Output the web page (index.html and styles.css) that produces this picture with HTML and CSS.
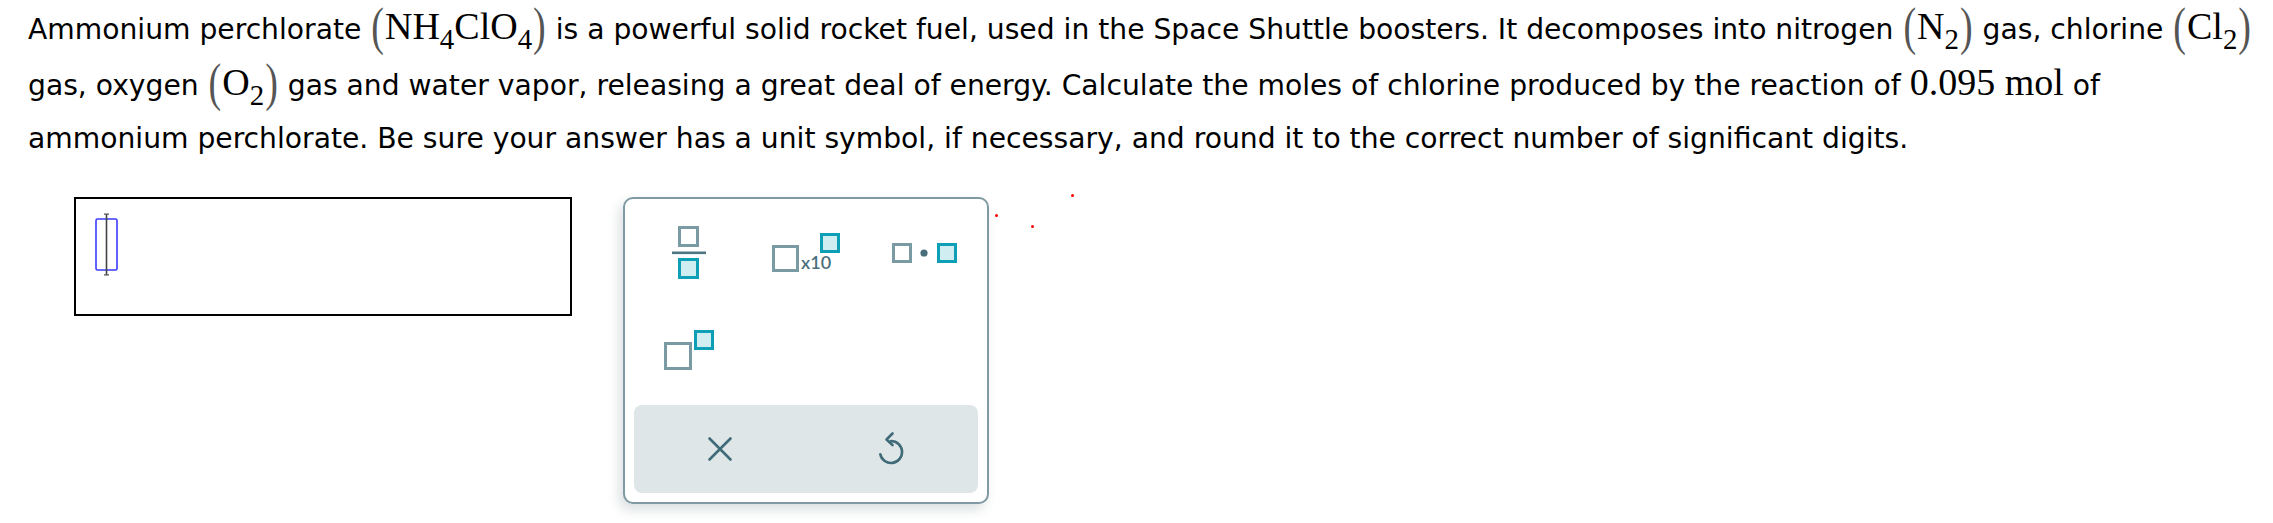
FILE: index.html
```html
<!DOCTYPE html>
<html lang="en">
<head>
<meta charset="utf-8">
<title>Ammonium perchlorate question</title>
<link rel="stylesheet" href="styles.css">
</head>
<body>
<div class="page">
  <p class="prompt">Ammonium perchlorate <span class="math"><span class="paren">(</span>NH<sub>4</sub>ClO<sub>4</sub><span class="paren">)</span></span> is a powerful solid rocket fuel, used in the Space Shuttle boosters. It decomposes into nitrogen <span class="math"><span class="paren">(</span>N<sub>2</sub><span class="paren">)</span></span> gas, chlorine <span class="math"><span class="paren">(</span>Cl<sub>2</sub><span class="paren">)</span></span><br>gas, oxygen <span class="math"><span class="paren">(</span>O<sub>2</sub><span class="paren">)</span></span> gas and water vapor, releasing a great deal of energy. Calculate the moles of chlorine produced by the reaction of <span class="math">0.095 mol</span> of<br>ammonium perchlorate. Be sure your answer has a unit symbol, if necessary, and round it to the correct number of significant digits.</p>

  <div class="answer-row">
    <div class="input-box">
      <svg class="cursor" width="23" height="64" viewBox="0 0 23 64">
        <rect x="1" y="6" width="21" height="51" rx="1.5" fill="none" stroke="#3b3bff" stroke-width="1.6"/>
        <line x1="11.5" y1="1" x2="11.5" y2="62" stroke="#444" stroke-width="1.6"/>
        <path d="M9 1.2 H14 M9 61.8 H14" stroke="#555" stroke-width="1.2"/>
      </svg>
    </div>

    <div class="panel">
      <div class="keys">
        <div class="key key-left">
          <svg width="34" height="54" viewBox="0 0 34 54">
            <rect x="7.5" y="1.5" width="18" height="18" fill="#fff" stroke="#7b9ba4" stroke-width="3"/>
            <rect x="0" y="25.5" width="34" height="2.6" fill="#4e7682"/>
            <rect x="7.5" y="33.5" width="18" height="18" fill="#d0edf2" stroke="#0c9fb5" stroke-width="3"/>
          </svg>
        </div>
        <div class="key">
          <svg width="68" height="40" viewBox="0 0 68 40">
            <rect x="1.5" y="13.5" width="24" height="24" fill="#fff" stroke="#7b9ba4" stroke-width="3"/>
            <text x="29" y="36" class="x10">x10</text>
            <rect x="49.5" y="1.5" width="17" height="17" fill="#d0edf2" stroke="#0c9fb5" stroke-width="3"/>
          </svg>
        </div>
        <div class="key key-right">
          <svg width="65" height="20" viewBox="0 0 65 20">
            <rect x="1.5" y="1.5" width="17" height="17" fill="#fff" stroke="#7b9ba4" stroke-width="3"/>
            <circle cx="32" cy="10" r="3.6" fill="#4a6f7c"/>
            <rect x="46.5" y="1.5" width="17" height="17" fill="#d0edf2" stroke="#0c9fb5" stroke-width="3"/>
          </svg>
        </div>
        <div class="key key-left">
          <svg width="50" height="40" viewBox="0 0 50 40">
            <rect x="1.5" y="13.5" width="25" height="25" fill="#fff" stroke="#7b9ba4" stroke-width="3"/>
            <rect x="31.5" y="1.5" width="17" height="17" fill="#d0edf2" stroke="#0c9fb5" stroke-width="3"/>
          </svg>
        </div>
      </div>
      <div class="actions">
        <svg width="26" height="26" viewBox="0 0 26 26">
          <path d="M2.5 2.5 L23.5 23.5 M23.5 2.5 L2.5 23.5" stroke="#3f6a78" stroke-width="2.6" stroke-linecap="round" fill="none"/>
        </svg>
        <svg class="undo" width="28" height="34" viewBox="0 0 28 34">
          <path d="M13 10 A11 11 0 1 1 2.3 23.2" stroke="#3f6a78" stroke-width="2.6" stroke-linecap="round" fill="none"/>
          <path d="M14.5 2.5 L8.5 8.5 L14.5 14" stroke="#3f6a78" stroke-width="2.6" stroke-linecap="round" stroke-linejoin="round" fill="none"/>
        </svg>
      </div>
    </div>
  </div>

  <span class="marker marker-a"></span>
  <span class="marker marker-b"></span>
  <span class="marker marker-c"></span>
</div>
</body>
</html>
```
FILE: styles.css
```css
html, body {
  margin: 0;
  padding: 0;
  background: #ffffff;
}

body {
  font-family: "DejaVu Sans", Verdana, sans-serif;
  color: #000000;
}

.page {
  position: relative;
  padding: 0 0 0 28px;
  height: 523px;
}

.prompt {
  margin: 0 0 32px 0;
  font-size: 28.2px;
  line-height: 53px;
  white-space: nowrap;
}

.math {
  font-family: "Liberation Serif", "Times New Roman", serif;
  font-size: 38px;
}

.math sub {
  font-size: 0.76em;
  vertical-align: -0.33em;
  line-height: 0;
}

.paren {
  display: inline-block;
  color: #555555;
  transform: scaleY(1.4);
  margin: 0 1px;
}

.answer-row {
  display: flex;
  align-items: flex-start;
  gap: 51px;
  margin-left: 46px;
}

.input-box {
  box-sizing: border-box;
  width: 498px;
  height: 119px;
  border: 2px solid #000000;
  padding: 14px 0 0 19px;
}

.cursor {
  display: block;
}

.panel {
  box-sizing: border-box;
  width: 366px;
  height: 307px;
  border: 2px solid #7f9aa2;
  border-radius: 10px;
  padding: 5px 9px 9px;
  box-shadow: -4px 6px 12px rgba(40, 60, 70, 0.16);
  display: flex;
  flex-direction: column;
  background: #ffffff;
}

.keys {
  display: grid;
  grid-template-columns: repeat(3, 1fr);
  grid-auto-rows: 97px;
}

.key {
  display: flex;
  align-items: center;
  justify-content: center;
}

.key-left {
  padding-right: 4px;
}

.key-right {
  padding-left: 8px;
}

.key svg {
  display: block;
}

.x10 {
  font-family: "Lato", "Open Sans", sans-serif;
  font-size: 18px;
  font-weight: 600;
  fill: #4a6f7c;
}

.actions {
  margin-top: auto;
  height: 88px;
  background: #dfe6e8;
  border-radius: 8px;
  display: grid;
  grid-template-columns: 1fr 1fr;
  align-items: center;
  justify-items: center;
}

.undo {
  margin-top: -2px;
}

.marker {
  position: absolute;
  width: 3px;
  height: 3px;
  border-radius: 50%;
  background: #ff0000;
}

.marker-a { left: 995px; top: 214px; }
.marker-b { left: 1031px; top: 225px; }
.marker-c { left: 1071px; top: 194px; }
```
